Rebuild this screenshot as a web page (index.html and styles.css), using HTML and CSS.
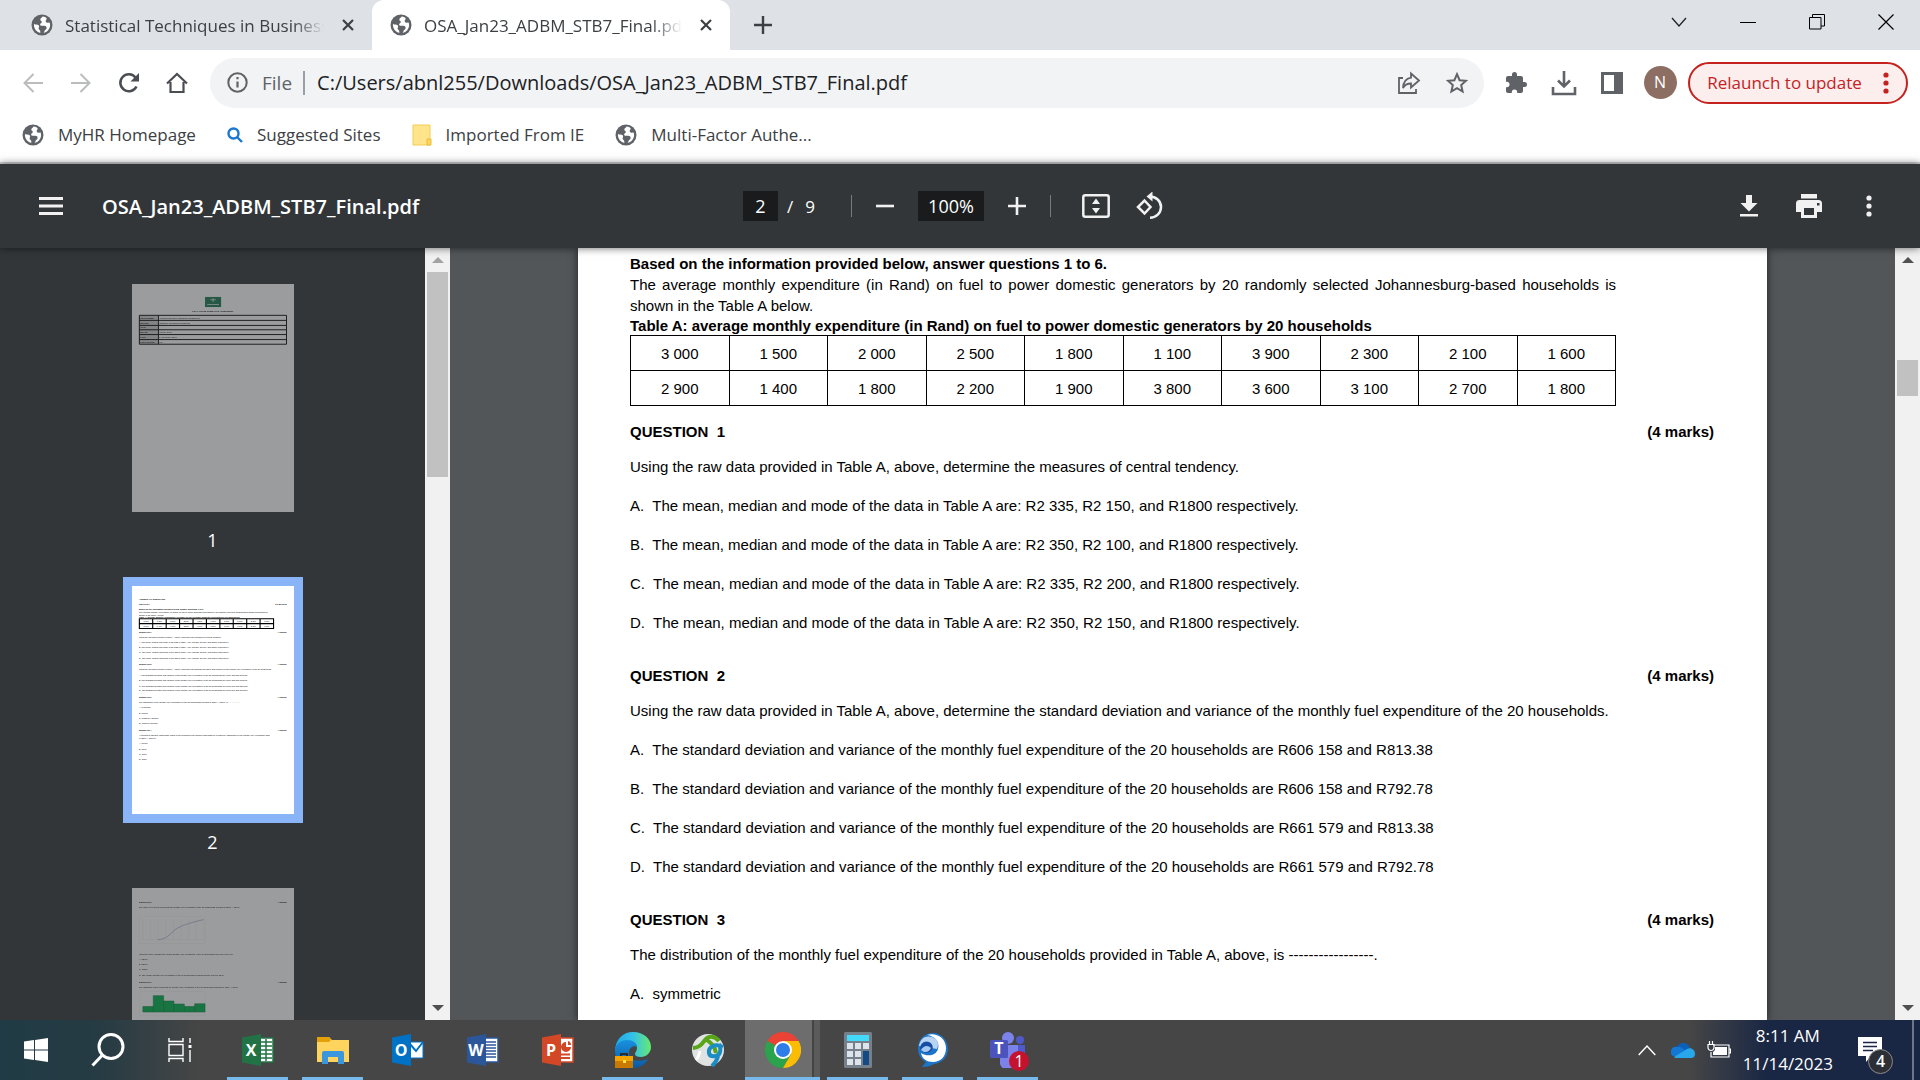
FILE: index.html
```html
<!DOCTYPE html>
<html lang="en">
<head>
    <meta charset="UTF-8">
    <meta name="viewport" content="width=device-width, initial-scale=1.0">
    <title>OSA_Jan23_ADBM_STB7_Final.pdf</title>
    <link rel="stylesheet" href="styles.css">
</head>
<body>
    <!-- shared icons -->
    <svg class="defs" width="0" height="0" aria-hidden="true">
        <symbol id="globe" viewBox="0 0 22 22">
            <circle cx="11" cy="11" r="10.5" fill="#5f6368"/>
            <path d="M11.5 2.6c-.6 1.500-2.200 1.700-2.200 3.100 0 1.200 1.500.8 1.500 2.200 0 1.300-1.700 1.200-1.700 2.500 0 .9.700 1.300 1.900 1.300h2.300c1.500 0 2.300.9 2.300 2.200 0 1.100-.8 1.500-1.500 2.100-.7.700-.6 2-1.600 3 3.700-.8 6.600-4.100 6.600-8 0-.9-.2-1.800-.5-2.600l-1.900.3c-1.200.1-2-.6-2-1.700 0-1.200 1-1.500 1-2.300 0-.9-1.900-2-4.200-2.100zM3 9.800c-.5 3.700 1.600 7.400 5.200 8.800l1.100.3c0-1.200.1-2.100-.5-2.700-.5-.5-1.200-.7-1.200-1.700 0-.9.500-1.300.5-2 0-1.500-1.200-1.700-2.600-1.900C4.300 10.500 3.600 10.500 3 9.800z" fill="#fff"/>
        </symbol>
        <symbol id="cross" viewBox="0 0 12 12">
            <path d="M1 1l10 10M11 1L1 11" stroke="#3c4043" stroke-width="2.200" fill="none"/>
        </symbol>
        <symbol id="dots" viewBox="0 0 6 24">
            <circle cx="3" cy="4" r="2.600"/><circle cx="3" cy="12" r="2.600"/><circle cx="3" cy="20" r="2.600"/>
        </symbol>
    </svg>

    <header class="browser">
        <div class="tab-strip">
            <button class="tab">
                <svg class="favicon"><use href="#globe"/></svg>
                <span class="tab-title">Statistical Techniques in Business</span>
                <svg class="tab-close"><use href="#cross"/></svg>
            </button>
            <button class="tab active">
                <svg class="favicon"><use href="#globe"/></svg>
                <span class="tab-title">OSA_Jan23_ADBM_STB7_Final.pdf</span>
                <svg class="tab-close"><use href="#cross"/></svg>
            </button>
            <button class="new-tab" aria-label="New tab">
                <svg width="18" height="18" viewBox="0 0 18 18"><path d="M9 0v18M0 9h18" stroke="#3c4043" stroke-width="2.400"/></svg>
            </button>
            <div class="window-controls">
                <button aria-label="Search tabs"><svg width="16" height="16" viewBox="0 0 16 16"><path d="M1 4l7 8 7-8" stroke="#222" stroke-width="1.300" fill="none"/></svg></button>
                <button aria-label="Minimize"><svg width="16" height="16" viewBox="0 0 16 16"><path d="M0 8.500h16" stroke="#000"/></svg></button>
                <button aria-label="Restore"><svg width="16" height="16" viewBox="0 0 16 16"><path d="M.5 3.500h11.500v11.500H.5zM3.500 3.500V.5h12v11.500H12" stroke="#000" fill="none"/></svg></button>
                <button aria-label="Close"><svg width="16" height="16" viewBox="0 0 16 16"><path d="M.5.5l15 15M15.500.5l-15 15" stroke="#000" stroke-width="1.200"/></svg></button>
            </div>
        </div>

        <div class="nav-bar">
            <button class="nav-button" aria-label="Back"><svg width="20" height="20" viewBox="0 0 20 20" fill="none" stroke="#babcbe" stroke-width="2"><path d="M20 10H1.500M10.500 1L1.500 10l9 9"/></svg></button>
            <button class="nav-button" aria-label="Forward"><svg width="20" height="20" viewBox="0 0 20 20" fill="none" stroke="#babcbe" stroke-width="2"><path d="M0 10h18.500M9.500 1l9 9-9 9"/></svg></button>
            <button class="nav-button" aria-label="Reload"><svg width="22" height="22" viewBox="0 0 22 22" fill="none" stroke="#4a4d51" stroke-width="2.500"><path d="M18.500 14.500A8.500 8.500 0 1 1 17.500 5.500"/><path d="M21 1v8.500h-8.500z" fill="#4a4d51" stroke="none"/></svg></button>
            <button class="nav-button" aria-label="Home"><svg width="22" height="22" viewBox="0 0 22 22" fill="none" stroke="#4a4d51" stroke-width="2.200"><path d="M1 11.500L11 2l10 9.500M4.500 10v10h13V10"/></svg></button>
            <div class="omnibox">
                <svg width="21" height="21" viewBox="0 0 21 21"><circle cx="10.500" cy="10.500" r="9.200" fill="none" stroke="#5f6368" stroke-width="2"/><path d="M10.500 9.500v6M10.500 5v2.300" stroke="#5f6368" stroke-width="2.200"/></svg>
                <label class="scheme" for="address">File</label>
                <input id="address" class="address" type="text" value="C:/Users/abnl255/Downloads/OSA_Jan23_ADBM_STB7_Final.pdf">
                <button class="nav-button" aria-label="Share"><svg width="24" height="24" viewBox="0 0 24 24" fill="none" stroke="#5f6368" stroke-width="1.800"><path d="M6 7H2v15h17v-4"/><path d="M14 2.500l8 7-8 7v-4c-4 0-6.500 1.500-8 4.500.3-5.500 3-9.500 8-10.300z"/></svg></button>
                <button class="nav-button" aria-label="Bookmark"><svg width="22" height="22" viewBox="0 0 22 22" fill="none" stroke="#5f6368" stroke-width="2"><path d="M11 2.200l2.600 6 6.400.6-4.800 4.300 1.400 6.400L11 16.100l-5.600 3.400 1.400-6.400L2 8.800l6.400-.6z"/></svg></button>
            </div>
            <button class="nav-button" aria-label="Extensions"><svg width="24" height="24" viewBox="0 0 24 24" fill="#5f6368"><path d="M20.500 11H19V7c0-1.100-.9-2-2-2h-4V3.500a2.500 2.500 0 0 0-5 0V5H4c-1.100 0-2 .9-2 2v3.800h.8a2.700 2.700 0 0 1 0 5.400H2V20c0 1.100.9 2 2 2h3.800v-.8a2.700 2.700 0 0 1 5.400 0v.8H17c1.100 0 2-.9 2-2v-4h1.500a2.500 2.500 0 0 0 0-5z"/></svg></button>
            <button class="nav-button" aria-label="Downloads"><svg width="26" height="26" viewBox="0 0 26 26" fill="none" stroke="#5f6368" stroke-width="2.600"><path d="M13 1v15M7 10.500l6 6 6-6M2 17v7h22v-7"/></svg></button>
            <button class="nav-button" aria-label="Side panel"><svg width="22" height="22" viewBox="0 0 22 22"><path d="M0 0h22v22H0zM3 3v16h10V3z" fill="#5f6368" fill-rule="evenodd"/></svg></button>
            <button class="nav-button" aria-label="Profile"><span class="avatar">N</span></button>
            <button class="relaunch">Relaunch to update <svg width="6" height="24" fill="#c5221f"><use href="#dots"/></svg></button>
        </div>

        <nav class="bookmarks">
            <a href="#"><svg class="favicon"><use href="#globe"/></svg>MyHR Homepage</a>
            <a href="#"><svg width="16" height="16" viewBox="0 0 16 16" fill="none" stroke="#1a77d2" stroke-width="2.400"><circle cx="6.500" cy="6.500" r="5"/><path d="M10 10l5 5"/></svg>Suggested Sites</a>
            <a href="#"><svg width="20" height="22" viewBox="0 0 20 22"><path d="M1 1h17v20H1z" fill="#ffe48c" stroke="#f2cc52"/><path d="M15 15h4v6h-4z" fill="#ffd55c" stroke="#e8bd3c"/></svg>Imported From IE</a>
            <a href="#"><svg class="favicon"><use href="#globe"/></svg>Multi-Factor Authe...</a>
        </nav>
    </header>

    <div class="pdf-toolbar">
        <div class="toolbar-left">
            <button aria-label="Menu"><svg width="24" height="18" viewBox="0 0 24 18" fill="#f1f1f1"><path d="M0 0h24v3H0zM0 7.500h24v3H0zM0 15h24v3H0z"/></svg></button>
            <span class="file-name">OSA_Jan23_ADBM_STB7_Final.pdf</span>
        </div>
        <div class="toolbar-center">
            <input class="page-input" type="text" value="2" aria-label="Page number">
            <span class="page-count"><span>/</span><span>9</span></span>
            <span class="divider"></span>
            <button aria-label="Zoom out"><svg width="18" height="18" viewBox="0 0 18 18"><path d="M0 9h18" stroke="#f1f1f1" stroke-width="2.600"/></svg></button>
            <input class="zoom-input" type="text" value="100%" aria-label="Zoom level">
            <button aria-label="Zoom in"><svg width="18" height="18" viewBox="0 0 18 18"><path d="M0 9h18M9 0v18" stroke="#f1f1f1" stroke-width="2.600"/></svg></button>
            <span class="divider"></span>
            <div class="view-buttons">
                <button aria-label="Fit to page"><svg width="28" height="24" viewBox="0 0 28 24"><rect x="1.300" y="1.300" width="25.400" height="21.400" rx="2" fill="none" stroke="#f1f1f1" stroke-width="2.500"/><path d="M14 4.500l4 5.500h-8zM14 19.500l4-5.500h-8z" fill="#f1f1f1"/></svg></button>
                <button aria-label="Rotate counterclockwise"><svg width="28" height="28" viewBox="0 0 28 28" fill="none" stroke="#f1f1f1" stroke-width="2.500"><path d="M9.500 8.500l6 6.500-6 6.500-6.500-6.500z"/><path d="M14.500 4.500c6.500 0 11.500 4.500 11.500 10.500s-5 10.700-11 10.700"/><path d="M17.500-.5v10l-6-5z" fill="#f1f1f1" stroke="none"/></svg></button>
            </div>
        </div>
        <div class="toolbar-right">
            <button aria-label="Download"><svg width="18" height="22" viewBox="0 0 18 22" fill="#f1f1f1"><path d="M6 0h6v8h5.500L9 16.500.5 8H6zM0 19h18v2.500H0z"/></svg></button>
            <button aria-label="Print"><svg width="26" height="24" viewBox="0 0 26 24" fill="#f1f1f1"><path d="M5 0h16v4.500H5zM3.500 6h19A3.500 3.500 0 0 1 26 9.500V18h-5v6H5v-6H0V9.500A3.500 3.500 0 0 1 3.500 6zM8 14v7h10v-7zM21 9v2.500h2.500V9z" fill-rule="evenodd"/></svg></button>
            <button aria-label="More actions"><svg width="6" height="24" fill="#f1f1f1"><use href="#dots"/></svg></button>
        </div>
    </div>

    <main class="viewer">
        <aside class="sidebar">
            <div class="thumbnails">
                <figure>
                    <div class="thumb dim">
                        <svg viewBox="0 0 1189 1674">
                            <rect x="536" y="95" width="118" height="74" fill="#1c7a52"/>
                            <path d="M595 105v28M575 116h40M552 150h86" stroke="#b9d6c9" stroke-width="8"/>
                            <text x="594" y="205" text-anchor="middle" font-weight="700">FINAL ONLINE SUMMATIVE ASSESSMENT</text>
                            <g fill="#d0d0d0"><rect x="54" y="230" width="140" height="212"/></g>
                            <path d="M54 230h1080v212H54zM194 230v212M54 267h1080M54 304h1080M54 336h1080M54 371h1080M54 408h1080" fill="none" stroke="#000" stroke-width="7"/>
                            <g font-weight="700"><text x="60" y="255">PROGRAMME</text><text x="60" y="292">MODULE</text><text x="60" y="325">YEAR</text><text x="60" y="359">INTAKE</text><text x="60" y="396">DATE</text><text x="60" y="432">TOTAL MARKS</text></g>
                            <text x="200" y="255">Advanced Diploma in Business Management</text><text x="200" y="292">Statistical Techniques in Business</text><text x="200" y="359">January 2023</text><text x="200" y="396">14 November 2023</text><text x="200" y="432">100</text>
                        </svg>
                    </div>
                    <figcaption>1</figcaption>
                </figure>
                <figure>
                    <div class="thumb selected">
                        <svg viewBox="0 0 1189 1674">
                            <g font-weight="700">
                                <text x="52" y="101">ANSWER ALL QUESTIONS</text><text x="52" y="138">SECTION A</text><text x="1136" y="138" text-anchor="end">[40 MARKS]</text>
                                <text x="52" y="175">Based on the information provided below, answer questions 1 to 6.</text>
                                <text x="52" y="235">Table A: average monthly expenditure (in Rand) on fuel to power domestic generators by 20 households</text>
                                <text x="52" y="344">QUESTION 1</text><text x="1136" y="344" text-anchor="end">(4 marks)</text>
                                <text x="52" y="583">QUESTION 2</text><text x="1136" y="583" text-anchor="end">(4 marks)</text>
                                <text x="52" y="823">QUESTION 3</text><text x="1136" y="823" text-anchor="end">(4 marks)</text>
                                <text x="52" y="1066">QUESTION 4</text><text x="1136" y="1066" text-anchor="end">(4 marks)</text>
                            </g>
                            <text x="52" y="197">The average monthly expenditure (in Rand) on fuel to power domestic generators by 20 randomly selected Johannesburg-based households is</text>
                            <text x="52" y="217">shown in the Table A below.</text>
                            <path d="M54 240h985v72H54zM54 276h985M152 240v72M251 240v72M349 240v72M448 240v72M546 240v72M645 240v72M743 240v72M842 240v72M940 240v72" fill="none" stroke="#000" stroke-width="8"/>
                            <text x="84" y="264">3 000</text><text x="182" y="264">1 500</text><text x="281" y="264">2 000</text><text x="379" y="264">2 500</text><text x="478" y="264">1 800</text><text x="576" y="264">1 100</text><text x="675" y="264">3 900</text><text x="773" y="264">2 300</text><text x="872" y="264">2 100</text><text x="970" y="264">1 600</text>
                            <text x="84" y="300">2 900</text><text x="182" y="300">1 400</text><text x="281" y="300">1 800</text><text x="379" y="300">2 200</text><text x="478" y="300">1 900</text><text x="576" y="300">3 800</text><text x="675" y="300">3 600</text><text x="773" y="300">3 100</text><text x="872" y="300">2 700</text><text x="970" y="300">1 800</text>
                            <text x="52" y="380">Using the raw data provided in Table A, above, determine the measures of central tendency.</text>
                            <text x="52" y="417">A. The mean, median and mode of the data in Table A are: R2 335, R2 150, and R1800 respectively.</text>
                            <text x="52" y="454">B. The mean, median and mode of the data in Table A are: R2 350, R2 100, and R1800 respectively.</text>
                            <text x="52" y="495">C. The mean, median and mode of the data in Table A are: R2 335, R2 200, and R1800 respectively.</text>
                            <text x="52" y="534">D. The mean, median and mode of the data in Table A are: R2 350, R2 150, and R1800 respectively.</text>
                            <text x="52" y="620">Using the raw data provided in Table A, above, determine the standard deviation and variance of the monthly fuel expenditure of the 20 households.</text>
                            <text x="52" y="657">A. The standard deviation and variance of the monthly fuel expenditure of the 20 households are R606 158 and R813.38</text>
                            <text x="52" y="694">B. The standard deviation and variance of the monthly fuel expenditure of the 20 households are R606 158 and R792.78</text>
                            <text x="52" y="738">C. The standard deviation and variance of the monthly fuel expenditure of the 20 households are R661 579 and R813.38</text>
                            <text x="52" y="774">D. The standard deviation and variance of the monthly fuel expenditure of the 20 households are R661 579 and R792.78</text>
                            <text x="52" y="860">The distribution of the monthly fuel expenditure of the 20 households provided in Table A, above, is -----------------.</text>
                            <text x="52" y="899">A. symmetric</text><text x="52" y="941">B. normal</text><text x="52" y="977">C. negatively skewed</text><text x="52" y="1014">D. positively skewed</text>
                            <text x="52" y="1102">According to Sturges' class width, which of the following is the optimal class width for a frequency distribution of the monthly fuel expenditure data</text>
                            <text x="52" y="1124">in Table A, above?</text>
                            <text x="52" y="1161">A. R1000</text><text x="52" y="1205">B. R560</text><text x="52" y="1239">C. R600</text><text x="52" y="1276">D. R800</text>
                        </svg>
                    </div>
                    <figcaption>2</figcaption>
                </figure>
                <figure>
                    <div class="thumb dim">
                        <svg viewBox="0 0 1189 1674">
                            <text x="52" y="109" font-weight="700">QUESTION 5</text><text x="1136" y="109" text-anchor="end" font-weight="700">(4 marks)</text>
                            <text x="52" y="146">The ogive curve below represents the monthly fuel expenditure of the 20 households provided in Table A, above.</text>
                            <path d="M54 208h484v200H54zM80 230v150h450M136 230v150M192 230v150M248 230v150M304 230v150M360 230v150M416 230v150M472 230v150M528 230v150" fill="none" stroke="#eee" stroke-width="4"/>
                            <path d="M190 380c50-5 70-20 110-60s110-60 225-88" fill="none" stroke="#b4c0d8" stroke-width="7"/>
                            <text x="52" y="489">Using the ogive, estimate the median monthly fuel expenditure of the 20 households who were surveyed.</text>
                            <text x="52" y="526">A. R2100</text><text x="52" y="562">B. R2150</text><text x="52" y="599">C. R2200</text>
                            <text x="52" y="643">D. The median monthly fuel expenditure of the 20 households is indeterminable from the ogive.</text>
                            <text x="52" y="694" font-weight="700">QUESTION 6</text><text x="1136" y="694" text-anchor="end" font-weight="700">(4 marks)</text>
                            <text x="52" y="731">The histogram below represents the monthly fuel expenditure of the 20 households provided in Table A, above.</text>
                            <path d="M54 760h484v175H54z" fill="none" stroke="#eee" stroke-width="4"/>
                            <path d="M80 910v-40h76v-80h76v40h76v22h76v18h76v-20h76v60z" fill="#00b04a" stroke="#0d7c40" stroke-width="4"/>
                            <path d="M156 870v40M232 830v80M308 852v58M384 870v40M460 870v40" stroke="#0d7c40" stroke-width="4"/>
                        </svg>
                    </div>
                </figure>
            </div>
            <div class="scrollbar side-scroll"><span class="arrow up muted"></span><span class="handle"></span><span class="arrow down"></span></div>
        </aside>

        <section class="document">
            <article class="page">
                <div class="intro">
                    <p class="strong">Based on the information provided below, answer questions 1 to 6.</p>
                    <p class="justified">The average monthly expenditure (in Rand) on fuel to power domestic generators by 20 randomly selected Johannesburg-based households is shown in the Table A below.</p>
                    <table>
                        <caption>Table A: average monthly expenditure (in Rand) on fuel to power domestic generators by 20 households</caption>
                        <tbody>
                            <tr><td>3 000</td><td>1 500</td><td>2 000</td><td>2 500</td><td>1 800</td><td>1 100</td><td>3 900</td><td>2 300</td><td>2 100</td><td>1 600</td></tr>
                            <tr><td>2 900</td><td>1 400</td><td>1 800</td><td>2 200</td><td>1 900</td><td>3 800</td><td>3 600</td><td>3 100</td><td>2 700</td><td>1 800</td></tr>
                        </tbody>
                    </table>
                </div>
                <div class="question">
                    <h2>QUESTION&nbsp; 1 <span>(4 marks)</span></h2>
                    <p>Using the raw data provided in Table A, above, determine the measures of central tendency.</p>
                    <p>A.&nbsp; The mean, median and mode of the data in Table A are: R2 335, R2 150, and R1800 respectively.</p>
                    <p>B.&nbsp; The mean, median and mode of the data in Table A are: R2 350, R2 100, and R1800 respectively.</p>
                    <p>C.&nbsp; The mean, median and mode of the data in Table A are: R2 335, R2 200, and R1800 respectively.</p>
                    <p>D.&nbsp; The mean, median and mode of the data in Table A are: R2 350, R2 150, and R1800 respectively.</p>
                </div>
                <div class="question">
                    <h2>QUESTION&nbsp; 2 <span>(4 marks)</span></h2>
                    <p>Using the raw data provided in Table A, above, determine the standard deviation and variance of the monthly fuel expenditure of the 20 households.</p>
                    <p>A.&nbsp; The standard deviation and variance of the monthly fuel expenditure of the 20 households are R606 158 and R813.38</p>
                    <p>B.&nbsp; The standard deviation and variance of the monthly fuel expenditure of the 20 households are R606 158 and R792.78</p>
                    <p>C.&nbsp; The standard deviation and variance of the monthly fuel expenditure of the 20 households are R661 579 and R813.38</p>
                    <p>D.&nbsp; The standard deviation and variance of the monthly fuel expenditure of the 20 households are R661 579 and R792.78</p>
                </div>
                <div class="question">
                    <h2>QUESTION&nbsp; 3 <span>(4 marks)</span></h2>
                    <p>The distribution of the monthly fuel expenditure of the 20 households provided in Table A, above, is -----------------.</p>
                    <p>A.&nbsp; symmetric</p>
                </div>
            </article>
        </section>
        <div class="scrollbar doc-scroll"><span class="arrow up"></span><span class="handle"></span><span class="arrow down"></span></div>
    </main>

    <footer class="taskbar">
        <div class="system-buttons">
            <button aria-label="Start"><svg width="24" height="24" viewBox="0 0 24 24" fill="#fff"><path d="M0 3.500l10-1.400v9.400H0zM11 2l13-2v11.500H11zM0 12.500h10v9.400L0 20.500zM11 12.500h13V24l-13-2z"/></svg></button>
            <button aria-label="Search"><svg width="34" height="34" viewBox="0 0 34 34" fill="none" stroke="#fff" stroke-width="3"><circle cx="20" cy="13.500" r="12"/><path d="M11.500 22L1.500 32.500"/></svg></button>
            <button aria-label="Task view"><svg width="24" height="24" viewBox="0 0 24 24" fill="none" stroke="#fff" stroke-width="1.400"><path d="M1 0v3.500h14V0M1 24v-3.500h14V24M1 6.500h14v11H1zM22 0v5M22 12v12"/><path d="M20.500 7h3v3h-3z" fill="#fff" stroke="none"/></svg></button>
        </div>
        <div class="apps">
            <button class="running" aria-label="Excel"><svg width="32" height="32" viewBox="0 0 32 32"><path d="M17 4h14v24H17z" fill="#fff" stroke="#217346" stroke-width="1.500"/><path d="M18 8h12M18 12h12M18 16h12M18 20h12M18 24h12M24 5v22" stroke="#217346" stroke-width="1.500"/><path d="M0 3.500L19 0v32L0 28.500z" fill="#217346"/><text x="9" y="22" class="letter">X</text></svg></button>
            <button class="running" aria-label="File Explorer"><svg width="34" height="32" viewBox="0 0 34 32"><path d="M1 3h12l3 3h17v22H1z" fill="#ffd45e"/><path d="M1 3h12l2 3-2 2H1z" fill="#e3a008"/><path d="M6 30V19q0-2 2-2h18q2 0 2 2v11h-6v-7H12v7z" fill="#3a96dd"/></svg></button>
            <button aria-label="Outlook"><svg width="32" height="32" viewBox="0 0 32 32"><path d="M17 8h14v16H17z" fill="#fff" stroke="#0072c6"/><path d="M17 9l7 8 7-9" fill="none" stroke="#0072c6" stroke-width="2"/><path d="M0 3.500L19 0v32L0 28.500z" fill="#0072c6"/><text x="9" y="22" class="letter">O</text></svg></button>
            <button aria-label="Word"><svg width="32" height="32" viewBox="0 0 32 32"><path d="M17 4h14v24H17z" fill="#fff" stroke="#2b579a" stroke-width="1.500"/><path d="M18 8h11M18 11h11M18 14h11M18 17h11M18 20h11M18 23h11" stroke="#2b579a" stroke-width="1.500"/><path d="M0 3.500L19 0v32L0 28.500z" fill="#2b579a"/><text x="9" y="22" class="letter">W</text></svg></button>
            <button aria-label="PowerPoint"><svg width="32" height="32" viewBox="0 0 32 32"><path d="M17 4h14v24H17z" fill="#fff" stroke="#d24726" stroke-width="1.500"/><path d="M19 20.500h9M19 24h9" stroke="#d24726" stroke-width="2"/><path d="M24 8a5 5 0 1 0 5 5h-5zM26 7v4h3a4 4 0 0 0-3-4z" fill="#d24726"/><path d="M0 3.500L19 0v32L0 28.500z" fill="#d24726"/><text x="9" y="22" class="letter">P</text></svg></button>
            <button class="running" aria-label="Edge">
                <svg width="36" height="36" viewBox="0 0 36 36">
                    <defs>
                        <linearGradient id="edge-top"><stop offset="0" stop-color="#1ba8e8"/><stop offset=".5" stop-color="#35c1e8"/><stop offset="1" stop-color="#66eb6e"/></linearGradient>
                        <linearGradient id="edge-low" x2="0" y2="1"><stop offset="0" stop-color="#1891df"/><stop offset="1" stop-color="#0c59a4"/></linearGradient>
                    </defs>
                    <path d="M0 20C0 7 8 0 18 0c11 0 18 7 18 15 0 6-5 10-10 10-4 0-6-1-6-3s2-3 2-6c0-4-4-7-9-7C6 9 1 13 0 20z" fill="url(#edge-top)"/>
                    <path d="M0 19c0-7 6-11 12-11 6 0 10 3 10 7-3-2-8 0-8 6 0 7 8 10 19 6-3 6-9 9-15 9C8 36 0 29 0 19z" fill="url(#edge-low)"/>
                    <path d="M0 24h18v12H0z" fill="#c97a00"/><path d="M0 24h18v5H0z" fill="#f3a400"/><path d="M6 24v-2h6v2" fill="none" stroke="#2c2c2c" stroke-width="2"/><path d="M8 28h3v3H8z" fill="#ffe24d"/>
                </svg>
            </button>
            <button aria-label="AnyConnect"><svg width="34" height="34" viewBox="0 0 34 34" fill="none"><circle cx="17" cy="17" r="16" fill="#dfe3e2"/><path d="M2 15C8 15 11 11 14 7s9-5 14 1" stroke="#58a618" stroke-width="4"/><path d="M14 6c6 3 10 7 11 14" stroke="#58a618" stroke-width="4"/><path d="M32 14c-8-4-15 0-14 6 1 5 10 4 11-1 1-4 0-6-1-8M27 22c0 5-3 8-6 11" stroke="#1b8cc4" stroke-width="4"/><path d="M5 27c2-2 3-5 4-9" stroke="#fff" stroke-width="3"/></svg></button>
            <button class="running current" aria-label="Chrome"><svg width="36" height="36" viewBox="0 0 36 36"><path d="M18 18L2.400 9A18 18 0 0 1 33.600 9z" fill="#ea4335"/><path d="M18 18L2.400 9A18 18 0 0 0 18 36l8-14z" fill="#2ba24c"/><path d="M18 9h15.600A18 18 0 0 1 18 36l7.800-13.500z" fill="#fbbc04"/><circle cx="18" cy="18" r="9" fill="#fff"/><circle cx="18" cy="18" r="7" fill="#2f7de9"/></svg></button>
            <button class="running" aria-label="Calculator"><svg width="28" height="36" viewBox="0 0 28 36"><rect width="28" height="36" rx="1.500" fill="#75808a"/><path d="M3 3h22v6H3z" fill="#43d9fb"/><path d="M3 11h6v6H3zM11 11h6v6h-6zM19 11h6v6h-6zM3 19h6v6H3zM11 19h6v6h-6zM3 27h6v6H3zM11 27h6v6h-6z" fill="#dce3ea"/><path d="M19 19h6v14h-6z" fill="#134a86"/></svg></button>
            <button class="running" aria-label="Jabber"><svg width="32" height="36" viewBox="0 0 32 36"><path d="M16 1C7 1 1 8 1 16s4 12 8 14l-4 5c5 0 9-1 12-3 8-1 14-7 14-15S25 1 16 1z" fill="#1c75c8"/><path d="M10 3c8-3 19 2 19 13 0 9-6 14-13 14-6 0-11-3-12-9 6 4 15 3 17-4C23 10 18 4 10 3z" fill="#fff"/><path d="M2 14C3 6 9 3 15 5s7 7 5 12" fill="#b9d4f3"/><path d="M3 17c0-6 5-9 9-7s5 6 2 9-8 2-11-2z" fill="#174fa5"/><path d="M4 18c3-5 7-5 10-2-2 5-7 5-10 2z" fill="#a5c9ef"/></svg></button>
            <button class="running teams" aria-label="Teams, 1 notification"><svg width="36" height="36" viewBox="0 0 36 36"><circle cx="18" cy="6" r="6" fill="#7b83eb"/><circle cx="30" cy="8" r="4" fill="#5059c9"/><path d="M10 13h18v13a9 9 0 0 1-18 6z" fill="#7b83eb"/><path d="M28 13h7v12h-7z" fill="#5059c9"/><rect y="8" width="18" height="18" rx="1.500" fill="#4b53bc"/><text x="9" y="22" class="letter">T</text></svg><span class="count">1</span></button>
        </div>
        <div class="tray">
            <svg width="18" height="12" viewBox="0 0 18 12"><path d="M.7 11L9 2l8.300 9" fill="none" stroke="#fff" stroke-width="1.500"/></svg>
            <svg width="24" height="16" viewBox="0 0 24 16"><path d="M6 5a7 7 0 0 1 13 1l-6 5-9-3z" fill="#0a5fb8"/><path d="M2 14A5 5 0 0 1 6 5c5-1 8 4 12 6l-4 4z" fill="#1278d4"/><path d="M3 15l13-8c4-2 8 1 8 5 0 2-1 4-4 4H5q-2 0-2-1z" fill="#28a8ea"/></svg>
            <svg width="24" height="18" viewBox="0 0 24 18" fill="none" stroke="#fff" stroke-width="1.200"><path d="M6 4h16v12H4v-5M22 8h1.500v4H22M2.500 0v3M5.500 0v3M1 3.500h6v3a3 3 0 0 1-6 0z"/><path d="M8 6h12v8H6v-3l2-2z" fill="#fff" stroke="none"/></svg>
            <div class="clock"><time>8:11 AM</time><time>11/14/2023</time></div>
            <button class="notifications" aria-label="4 notifications"><svg width="24" height="26" viewBox="0 0 24 26"><path d="M0 0h24v19H13l-5 6v-6H0z" fill="#fff"/><path d="M5 5.500h14M5 9.500h14M5 13.500h10" stroke="#1a2744" stroke-width="1.300"/></svg><span class="count">4</span></button>
        </div>
        <button class="show-desktop" aria-label="Show desktop"></button>
    </footer>
</body>
</html>
```

FILE: styles.css
```css
* {
    box-sizing: border-box;
}
body {
    margin: 0;
    height: 100vh;
    display: flex;
    flex-direction: column;
    overflow: hidden;
    font-family: "Open Sans", "Noto Sans", sans-serif;
    font-size: 17px;
    color: #3c4043;
}
button {
    display: flex;
    align-items: center;
    justify-content: center;
    padding: 0;
    border: none;
    background: none;
    font: inherit;
    color: inherit;
}
svg {
    flex: none;
}
p, h2, figure {
    margin: 0;
}
.defs {
    position: absolute;
}
.favicon {
    width: 22px;
    height: 22px;
}

/* browser window */
.browser {
    background: #fff;
    border-bottom: 2px solid #d5d7da;
}
.tab-strip {
    display: flex;
    height: 50px;
    background: #dee1e6;
}
.tab {
    width: 372px;
    gap: 12px;
    padding: 0 18px 0 31px;
}
.tab.active {
    width: 358px;
    padding-left: 18px;
    background: #fff;
    border-radius: 12px 12px 0 0;
}
.tab-title {
    flex: 1;
    margin-right: 6px;
    overflow: hidden;
    white-space: nowrap;
    text-align: left;
    mask-image: linear-gradient(to right, #000 88%, transparent);
}
.tab-close {
    width: 12px;
    height: 12px;
}
.new-tab {
    width: 66px;
}
.window-controls {
    display: flex;
    margin-left: auto;
    height: 43px;
}
.window-controls button {
    width: 69px;
}
.nav-bar {
    display: flex;
    align-items: center;
    height: 65px;
    padding: 0 12px 0 9px;
}
.nav-button {
    width: 48px;
    height: 48px;
}
.omnibox {
    flex: 1;
    display: flex;
    align-items: center;
    height: 50px;
    margin: 0 8px 0 9px;
    padding: 0 3px 0 17px;
    border-radius: 25px;
    background: #f1f3f4;
}
.scheme {
    margin-left: 14px;
    padding-right: 11px;
    border-right: 2px solid #9aa0a6;
    font-size: 19px;
    line-height: 24px;
    color: #5f6368;
}
.address {
    flex: 1;
    padding: 0 0 0 12px;
    border: none;
    background: none;
    font: 20px "Open Sans", "Noto Sans", sans-serif;
    color: #202124;
}
.avatar {
    width: 33px;
    height: 33px;
    border-radius: 50%;
    background: #8d6e63;
    color: #fff;
    font-size: 16px;
    line-height: 33px;
}
.relaunch {
    width: 220px;
    height: 42px;
    margin-left: 4px;
    gap: 21px;
    border: 2px solid #c5221f;
    border-radius: 21px;
    background: #fceeed;
    color: #c5221f;
    white-space: nowrap;
}
.bookmarks {
    display: flex;
    align-items: center;
    height: 47px;
    gap: 31px;
    padding: 0 22px 8px;
}
.bookmarks a {
    display: flex;
    align-items: center;
    gap: 14px;
    color: #3c4043;
    text-decoration: none;
}

/* pdf toolbar */
.pdf-toolbar {
    display: flex;
    align-items: center;
    height: 84px;
    background: #323639;
    color: #fff;
    box-shadow: 0 0 8px rgba(0, 0, 0, .6);
    z-index: 1;
}
.toolbar-left, .toolbar-right {
    flex: 1;
    display: flex;
    align-items: center;
}
.toolbar-left {
    padding-left: 27px;
}
.toolbar-left button {
    width: 48px;
    height: 48px;
}
.file-name {
    margin-left: 27px;
    font-size: 20px;
    font-weight: 600;
}
.toolbar-center {
    display: flex;
    align-items: center;
    gap: 9px;
    padding-right: 10px;
}
.toolbar-center button {
    width: 48px;
    height: 48px;
}
.page-input, .zoom-input {
    height: 30px;
    padding: 0;
    border: none;
    background: #191b1c;
    color: #fff;
    font: 18px "Open Sans", "Noto Sans", sans-serif;
    text-align: center;
}
.page-input {
    width: 35px;
}
.zoom-input {
    width: 66px;
}
.page-count {
    display: flex;
    gap: 12px;
    width: 55px;
}
.divider {
    width: 1px;
    height: 22px;
    background: #777a7c;
}
.view-buttons {
    display: flex;
    gap: 5px;
    margin-left: 12px;
}
.toolbar-right {
    justify-content: flex-end;
    padding-right: 21px;
}
.toolbar-right button {
    width: 60px;
    height: 48px;
}

/* viewer */
.viewer {
    flex: 1;
    display: flex;
    min-height: 0;
    background: #525659;
}
.sidebar {
    display: flex;
    width: 450px;
    background: #323639;
    overflow: hidden;
}
.thumbnails {
    flex: 1;
    display: flex;
    flex-direction: column;
    align-items: center;
    padding-top: 36px;
}
.thumbnails figcaption {
    padding: 12px 0 30px;
    line-height: 32px;
    text-align: center;
    font-size: 18px;
    color: #fff;
}
.thumb {
    width: 162px;
    background: #fff;
}
.thumb svg {
    display: block;
    width: 100%;
    font: 15px "Liberation Sans", Arial, sans-serif;
}
.thumb.dim {
    opacity: .51;
}
.thumb.selected {
    outline: 9px solid #8ab4f8;
}
.scrollbar {
    display: flex;
    flex-direction: column;
    width: 25px;
    padding: 0 2px;
    background: #f1f1f1;
}
.scrollbar .handle {
    height: 36px;
    background: #c1c1c1;
}
.side-scroll .handle {
    height: 205px;
}
.doc-scroll .handle {
    margin-top: 88px;
}
.arrow {
    height: 24px;
    display: flex;
    align-items: center;
    justify-content: center;
}
.arrow::after {
    content: "";
    border: 6px solid transparent;
    border-top-width: 0;
    border-bottom-color: #505050;
}
.arrow.down {
    margin-top: auto;
}
.arrow.down::after {
    border-width: 6px 6px 0;
    border-top-color: #505050;
}
.arrow.muted::after {
    border-bottom-color: #a3a3a3;
}
.document {
    flex: 1;
    padding: 0 128px;
    overflow: hidden;
}
.page {
    min-height: 100%;
    padding: 5px 53px 0 52px;
    background: #fff;
    color: #000;
    font: 15px/39px "Liberation Sans", Arial, sans-serif;
    box-shadow: 0 0 8px rgba(0, 0, 0, .6);
}
.intro {
    margin-right: 98px;
    line-height: 21px;
}
.strong {
    font-weight: bold;
}
.justified {
    text-align: justify;
}
table {
    width: 100%;
    table-layout: fixed;
    border-collapse: collapse;
}
caption {
    line-height: 19px;
    font-weight: bold;
    text-align: left;
    white-space: nowrap;
}
td {
    height: 35px;
    padding: 0;
    border: 1px solid #000;
    text-align: center;
}
.question {
    margin-top: 19px;
    white-space: nowrap;
}
.intro + .question {
    margin-top: 11px;
}
.question h2 {
    display: flex;
    justify-content: space-between;
    font-size: 15px;
    line-height: 30px;
}

/* taskbar */
.taskbar {
    display: flex;
    height: 60px;
    background: linear-gradient(to right, #203b45, #263b43 100px, #464646 200px, #464646 88%, #1a2744 92%);
    color: #fff;
    z-index: 1;
}
.system-buttons, .apps {
    display: flex;
}
.system-buttons button {
    width: 72px;
}
.apps {
    margin-left: 4px;
}
.apps button {
    position: relative;
    width: 75px;
}
.letter {
    fill: #fff;
    font: bold 16px "Open Sans", "Noto Sans", sans-serif;
    text-anchor: middle;
}
.running::after {
    content: "";
    position: absolute;
    left: 7px;
    right: 7px;
    bottom: 0;
    height: 3px;
    background: #76b9ed;
}
.current {
    background: linear-gradient(to right, #6d6d6d 90%, #444 90%, #444 92%, #5b5b5b 92%);
}
.current::after {
    left: 0;
    right: 0;
}
.count {
    position: absolute;
    border-radius: 50%;
    text-align: center;
}
.teams .count {
    right: 16px;
    bottom: 9px;
    width: 20px;
    height: 20px;
    background: #c4122f;
    font-size: 16px;
    line-height: 20px;
}
.tray {
    display: flex;
    align-items: center;
    margin-left: auto;
    padding-right: 18px;
    gap: 12px;
}
.clock {
    display: flex;
    flex-direction: column;
    text-align: center;
    font-size: 17px;
    line-height: 28px;
}
.tray > svg:first-child {
    margin-right: 3px;
}
.notifications {
    position: relative;
    width: 36px;
    height: 60px;
    margin-left: 13px;
    justify-content: flex-start;
}
.notifications .count {
    right: 1px;
    bottom: 6px;
    width: 25px;
    height: 25px;
    border: 1px solid #8a8a8a;
    background: #2d2f36;
    font-size: 16px;
    font-weight: 600;
    line-height: 23px;
}
.show-desktop {
    width: 8px;
    border-left: 2px solid #6f7688;
}
```
